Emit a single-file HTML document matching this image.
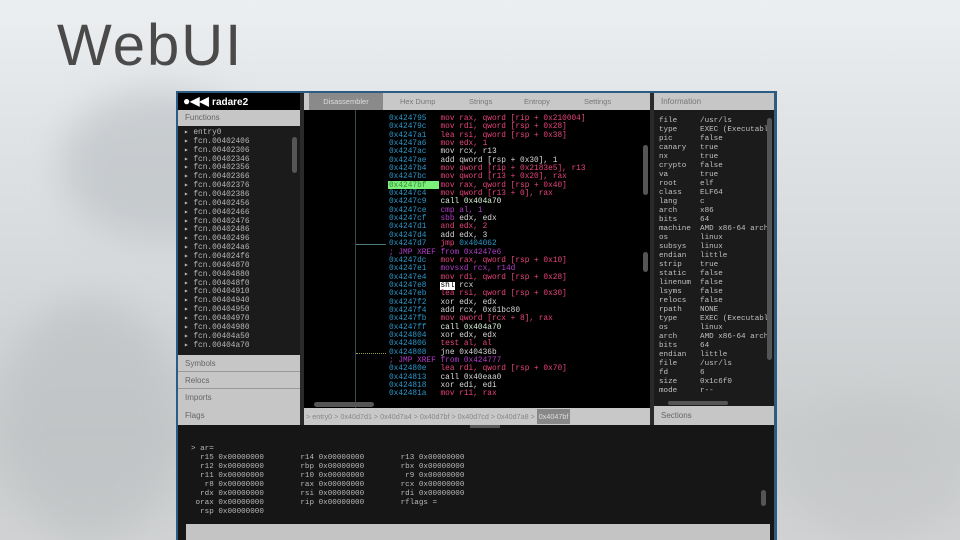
<!DOCTYPE html>
<html><head><meta charset="utf-8"><style>
*{margin:0;padding:0;box-sizing:border-box}
html,body{width:960px;height:540px;overflow:hidden}
body{position:relative;font-family:"Liberation Sans",sans-serif;
background:linear-gradient(180deg,#eceff1 0%,#e2e5e7 20%,#d6d9db 50%,#c9cccd 80%,#d0d2d3 100%)}
.blob{position:absolute;border-radius:50%;filter:blur(18px)}
h1{position:absolute;left:57px;top:12px;font-size:58px;font-weight:normal;color:#4a4a4a;letter-spacing:2px}
.frame{position:absolute;left:176px;top:91px;width:601px;height:449px;background:#2d5c82;}
.abs{position:absolute}
.mono{font-family:"Liberation Mono",monospace}
.code div{height:8.35px;line-height:8.35px;white-space:pre}
.a{color:#2c96c8}.m{color:#e8457a}.p{color:#b23cc8}.w{color:#d8d8d8}.g{color:#d8f0d8}
.fl div{height:8.86px;line-height:8.86px;white-space:pre;color:#b8b8b8}
.inf div{height:9px;line-height:9px;white-space:pre;color:#c0c0c0}
.con div{height:9px;line-height:9px;white-space:pre;color:#b8b8b8}
.gb{background:#c6c6c6;color:#666;font-size:8px;padding-left:7px}
</style></head><body>
<div class="blob" style="left:60px;top:90px;width:200px;height:150px;background:#b9bec2;opacity:.6"></div>
<div class="blob" style="left:0;top:300px;width:180px;height:240px;background:#bfc2c4;opacity:.7"></div>
<div class="blob" style="left:790px;top:400px;width:170px;height:140px;background:#c4c6c7;opacity:.6"></div>
<h1>WebUI</h1>
<div class="frame"></div>
<!-- left panel -->
<div class="abs" style="left:178px;top:93px;width:122px;height:17px;background:#000"></div>
<div class="abs" style="left:183px;top:93px;font-weight:bold;color:#fff;font-size:12px;line-height:17px">●◀◀ <span style="font-size:10px">radare2</span></div>
<div class="abs gb" style="left:178px;top:110px;width:122px;height:16px;line-height:16px">Functions</div>
<div class="abs" style="left:178px;top:126px;width:122px;height:229px;background:#1b1b1b"></div>
<div class="abs mono fl" style="left:184px;top:129px;font-size:7.8px">
<div>▸ entry0</div><div>▸ fcn.00402406</div><div>▸ fcn.00402306</div><div>▸ fcn.00402346</div><div>▸ fcn.00402356</div><div>▸ fcn.00402366</div><div>▸ fcn.00402376</div><div>▸ fcn.00402386</div><div>▸ fcn.00402456</div><div>▸ fcn.00402466</div><div>▸ fcn.00402476</div><div>▸ fcn.00402486</div><div>▸ fcn.00402496</div><div>▸ fcn.004024a6</div><div>▸ fcn.004024f6</div><div>▸ fcn.00404870</div><div>▸ fcn.00404880</div><div>▸ fcn.004048f0</div><div>▸ fcn.00404910</div><div>▸ fcn.00404940</div><div>▸ fcn.00404950</div><div>▸ fcn.00404970</div><div>▸ fcn.00404980</div><div>▸ fcn.00404a50</div><div>▸ fcn.00404a70</div></div>
<div class="abs" style="left:292px;top:137px;width:5px;height:36px;background:#555;border-radius:3px"></div>
<div class="abs gb" style="left:178px;top:355px;width:122px;height:17px;line-height:17px;border-bottom:1px solid #999">Symbols</div>
<div class="abs gb" style="left:178px;top:372px;width:122px;height:17px;line-height:17px;border-bottom:1px solid #999">Relocs</div>
<div class="abs gb" style="left:178px;top:389px;width:122px;height:18px;line-height:18px">Imports</div>
<div class="abs gb" style="left:178px;top:407px;width:122px;height:18px;line-height:18px">Flags</div>
<div class="abs" style="left:300px;top:93px;width:4px;height:332px;background:#2a2a2a"></div>
<!-- middle -->
<div class="abs" style="left:304px;top:93px;width:346px;height:17px;background:#c8c8c8;font-size:7.5px;color:#777;line-height:17px">
<span class="abs" style="left:5px;width:74px;height:17px;background:#8a8a8a;color:#ddd;text-align:center">Disassembler</span>
<span class="abs" style="left:96px">Hex Dump</span><span class="abs" style="left:165px">Strings</span><span class="abs" style="left:220px">Entropy</span><span class="abs" style="left:280px">Settings</span></div>
<div class="abs" style="left:304px;top:110px;width:346px;height:298px;background:#000"></div>
<div class="abs" style="left:355px;top:110px;width:1px;height:298px;background:#3a4a4a"></div>
<div class="abs" style="left:356px;top:244px;width:30px;height:1px;background:#4a7a7a"></div>
<div class="abs" style="left:356px;top:353px;width:30px;border-top:1px dotted #9a9a50"></div>
<div class="abs" style="left:388px;top:181px;width:51px;height:8px;background:#7af07a"></div>
<div class="abs mono code" style="left:389px;top:115px;font-size:7.8px">
<div><span class="a">0x424795</span>   <span class="m">mov rax, qword [rip + 0x210004]</span></div>
<div><span class="a">0x42479c</span>   <span class="m">mov rdi, qword [rsp + 0x28]</span></div>
<div><span class="a">0x4247a1</span>   <span class="m">lea rsi, qword [rsp + 0x38]</span></div>
<div><span class="a">0x4247a6</span>   <span class="m">mov edx, 1</span></div>
<div><span class="a">0x4247ac</span>   <span class="w">mov rcx, r13</span></div>
<div><span class="a">0x4247ae</span>   <span class="w">add qword [rsp + 0x30], 1</span></div>
<div><span class="a">0x4247b4</span>   <span class="m">mov qword [rip + 0x2183e5], r13</span></div>
<div><span class="a">0x4247bc</span>   <span class="m">mov qword [r13 + 0x20], rax</span></div>
<div><span style="color:#3a8a3a">0x4247bf</span>   <span class="m">mov rax, qword [rsp + 0x40]</span></div>
<div><span class="a">0x4247c4</span>   <span class="m">mov qword [r13 + 0], rax</span></div>
<div><span class="a">0x4247c9</span>   <span class="g">call 0x404a70</span></div>
<div><span class="a">0x4247ce</span>   <span class="p">cmp al, 1</span></div>
<div><span class="a">0x4247cf</span>   <span class="p">sbb</span> <span class="w">edx, edx</span></div>
<div><span class="a">0x4247d1</span>   <span class="m">and edx, 2</span></div>
<div><span class="a">0x4247d4</span>   <span class="w">add edx, 3</span></div>
<div><span class="a">0x4247d7</span>   <span class="m">jmp</span> <span class="a">0x404062</span></div>
<div class="p">; JMP XREF from 0x4247e6</div>
<div><span class="a">0x4247dc</span>   <span class="m">mov rax, qword [rsp + 0x10]</span></div>
<div><span class="a">0x4247e1</span>   <span class="p">movsxd rcx, r14d</span></div>
<div><span class="a">0x4247e4</span>   <span class="m">mov rdi, qword [rsp + 0x28]</span></div>
<div><span class="a">0x4247e8</span>   <span style="background:#fff;color:#000">shl</span> <span class="w">rcx</span></div>
<div><span class="a">0x4247eb</span>   <span class="m">lea rsi, qword [rsp + 0x30]</span></div>
<div><span class="a">0x4247f2</span>   <span class="w">xor edx, edx</span></div>
<div><span class="a">0x4247f4</span>   <span class="w">add rcx, 0x61bc80</span></div>
<div><span class="a">0x4247fb</span>   <span class="m">mov qword [rcx + 8], rax</span></div>
<div><span class="a">0x4247ff</span>   <span class="g">call 0x404a70</span></div>
<div><span class="a">0x424804</span>   <span class="w">xor edx, edx</span></div>
<div><span class="a">0x424806</span>   <span class="m">test al, al</span></div>
<div><span class="a">0x424808</span>   <span class="w">jne 0x40436b</span></div>
<div class="p">; JMP XREF from 0x424777</div>
<div><span class="a">0x42480e</span>   <span class="m">lea rdi, qword [rsp + 0x70]</span></div>
<div><span class="a">0x424813</span>   <span class="w">call 0x40eaa0</span></div>
<div><span class="a">0x424818</span>   <span class="w">xor edi, edi</span></div>
<div><span class="a">0x42481a</span>   <span class="m">mov r11, rax</span></div></div>
<div class="abs" style="left:643px;top:145px;width:5px;height:50px;background:#555;border-radius:3px"></div>
<div class="abs" style="left:643px;top:252px;width:5px;height:20px;background:#555;border-radius:3px"></div>
<div class="abs" style="left:314px;top:402px;width:60px;height:5px;background:#555;border-radius:3px"></div>
<div class="abs" style="left:304px;top:408px;width:346px;height:17px;background:#c8c8c8;font-size:7.2px;color:#888;line-height:17px;white-space:nowrap;padding-left:2px">&gt; entry0 &gt; 0x40d7d1 &gt; 0x40d7a4 &gt; 0x40d7bf &gt; 0x40d7cd &gt; 0x40d7a8 &gt; <span style="background:#888;color:#ddd;padding:3px 2px">0x4047bf</span></div>
<div class="abs" style="left:650px;top:93px;width:4px;height:332px;background:#2a2a2a"></div>
<!-- right -->
<div class="abs gb" style="left:654px;top:93px;width:120px;height:17px;line-height:17px;color:#777">Information</div>
<div class="abs" style="left:654px;top:110px;width:120px;height:296px;background:#1b1b1b"></div>
<div class="abs mono inf" style="left:659px;top:117px;font-size:7.6px">
<div>file     /usr/ls</div><div>type     EXEC (Executabl</div><div>pic      false</div><div>canary   true</div><div>nx       true</div><div>crypto   false</div><div>va       true</div><div>root     elf</div><div>class    ELF64</div><div>lang     c</div><div>arch     x86</div><div>bits     64</div><div>machine  AMD x86-64 arch</div><div>os       linux</div><div>subsys   linux</div><div>endian   little</div><div>strip    true</div><div>static   false</div><div>linenum  false</div><div>lsyms    false</div><div>relocs   false</div><div>rpath    NONE</div><div>type     EXEC (Executabl</div><div>os       linux</div><div>arch     AMD x86-64 arch</div><div>bits     64</div><div>endian   little</div><div>file     /usr/ls</div><div>fd       6</div><div>size     0x1c6f0</div><div>mode     r--</div></div>
<div class="abs" style="left:767px;top:118px;width:5px;height:242px;background:#555;border-radius:3px"></div>
<div class="abs" style="left:668px;top:401px;width:60px;height:4px;background:#555;border-radius:2px"></div>
<div class="abs gb" style="left:654px;top:406px;width:120px;height:19px;line-height:19px">Sections</div>
<!-- console -->
<div class="abs" style="left:178px;top:425px;width:596px;height:115px;background:#161616"></div>
<div class="abs" style="left:470px;top:425px;width:30px;height:3px;background:#555"></div>
<div class="abs mono con" style="left:191px;top:445px;font-size:7.6px">
<div>&gt; ar=</div>
<div>  r15 0x00000000        r14 0x00000000        r13 0x00000000</div>
<div>  r12 0x00000000        rbp 0x00000000        rbx 0x00000000</div>
<div>  r11 0x00000000        r10 0x00000000         r9 0x00000000</div>
<div>   r8 0x00000000        rax 0x00000000        rcx 0x00000000</div>
<div>  rdx 0x00000000        rsi 0x00000000        rdi 0x00000000</div>
<div> orax 0x00000000        rip 0x00000000        rflags =</div>
<div>  rsp 0x00000000</div></div>
<div class="abs" style="left:761px;top:490px;width:5px;height:16px;background:#555;border-radius:3px"></div>
<div class="abs" style="left:186px;top:524px;width:584px;height:16px;background:#c4c4c4"></div>
</body></html>
